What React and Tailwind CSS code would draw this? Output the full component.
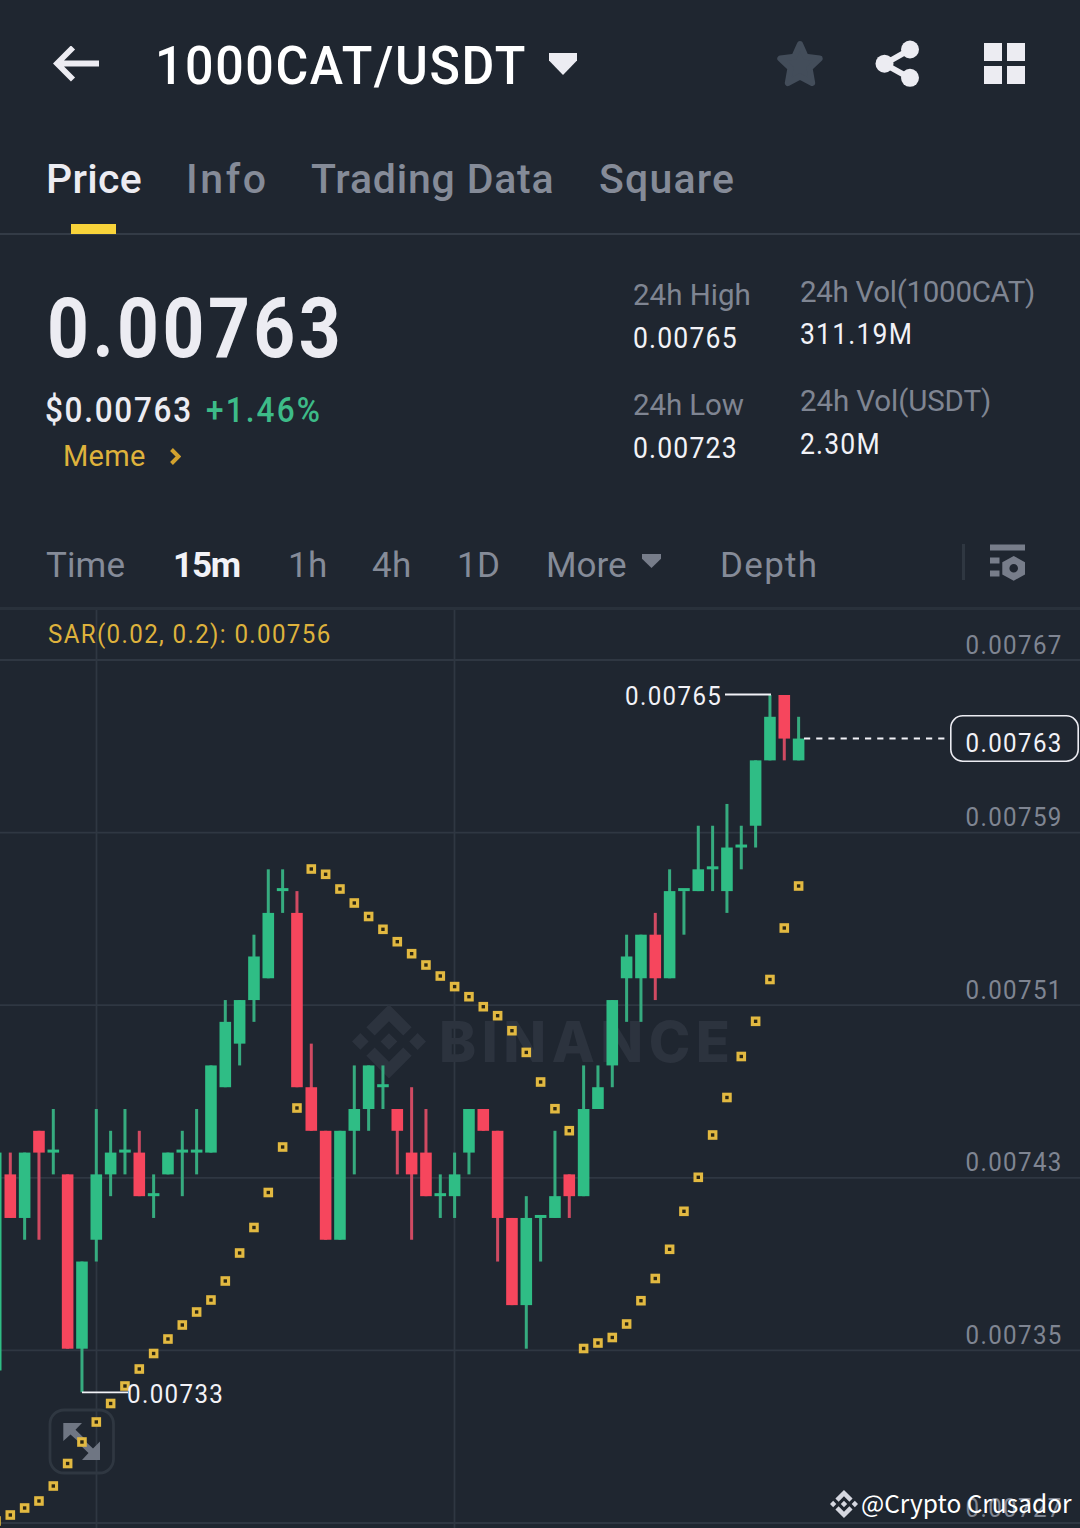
import { SiBinance } from 'react-icons/si'

const tabs = [
  { label: 'Price', className: 'w-[140px] tracking-[0.3px] text-[#ececf2]', active: true },
  { label: 'Info', className: 'w-[125px] tracking-[2.6px]' },
  { label: 'Trading Data', className: 'w-[288px] tracking-[0.8px]' },
  { label: 'Square', className: 'tracking-[1.2px]' },
]

const intervals = [
  { label: 'Time', className: 'w-[127px] tracking-[0.1px]' },
  { label: '15m', className: 'w-[115px] font-bold tracking-[-1.2px] text-[#f2f2f7]' },
  { label: '1h', className: 'w-[84px] tracking-[0.3px]' },
  { label: '4h', className: 'w-[85px] tracking-[0.3px]' },
  { label: '1D', className: 'w-[89px] tracking-[0.3px]' },
  { label: 'More', className: 'w-[94px] tracking-normal' },
]

// [open, high, low, close] in units of 0.00001, one entry per 15 minutes
const candles = [
  [743, 744, 741, 741],
  [741, 744, 740, 744],
  [745, 745, 740, 744],
  [744, 746, 743, 744],
  [743, 743, 735, 735],
  [735, 739, 733, 739],
  [740, 746, 739, 743],
  [743, 745, 742, 744],
  [744, 746, 743, 744],
  [744, 745, 742, 742],
  [742, 743, 741, 742],
  [743, 744, 743, 744],
  [744, 745, 742, 744],
  [744, 746, 743, 744],
  [744, 748, 744, 748],
  [747, 751, 747, 750],
  [749, 751, 748, 751],
  [751, 754, 750, 753],
  [752, 757, 752, 755],
  [756, 757, 755, 756],
  [755, 756, 747, 747],
  [747, 749, 745, 745],
  [745, 745, 740, 740],
  [740, 745, 740, 745],
  [745, 748, 743, 746],
  [746, 748, 745, 748],
  [747, 748, 746, 747],
  [746, 746, 743, 745],
  [744, 747, 740, 743],
  [744, 746, 742, 742],
  [742, 743, 741, 742],
  [742, 744, 741, 743],
  [744, 746, 743, 746],
  [746, 746, 745, 745],
  [745, 745, 739, 741],
  [741, 741, 737, 737],
  [737, 742, 735, 741],
  [741, 741, 739, 741],
  [741, 745, 741, 742],
  [743, 743, 741, 742],
  [742, 748, 742, 746],
  [746, 748, 746, 747],
  [748, 751, 747, 751],
  [752, 754, 750, 753],
  [752, 754, 750, 754],
  [754, 755, 751, 752],
  [752, 757, 752, 756],
  [756, 756, 754, 756],
  [756, 759, 756, 757],
  [757, 759, 756, 757],
  [756, 760, 755, 758],
  [758, 759, 757, 758],
  [759, 762, 758, 762],
  [762, 765, 762, 764],
  [765, 765, 762, 763],
  [762, 764, 762, 763],
]

// Parabolic SAR, y in chart pixels
const sar = [
  905, 898, 891, 876, 853.5, 832, 812, 793.5, 776, 759, 743.5, 729, 715, 702,
  690, 671, 643, 617.5, 582.5, 537, 498, 259, 264.3, 279, 293, 306.5, 319.3,
  331.7, 343.7, 355, 366, 376.6, 386.7, 396.7, 405.7, 420.7, 442.4, 472, 498.7,
  520.7, 738.5, 733, 727.5, 714, 690.7, 668.5, 639.3, 601.3, 567.3, 525, 487.5,
  446.5, 411.3, 369.5, 318, 276,
]

const axis = ['0.00767', '0.00759', '0.00751', '0.00743', '0.00735', '0.00727']

const xAt = (i) => 10.3 + i * 14.333
const yAt = (price) => 85 + (765 - price) * 21.79

function Candle({ i, data }) {
  const [open, high, low, close] = data
  const up = close >= open
  const x = xAt(i)
  const top = open === close ? yAt(close) - 3 : yAt(Math.max(open, close))
  const bottom = yAt(Math.min(open, close))
  return (
    <g>
      {high > low && (
        <rect
          x={x - 1.5}
          y={yAt(high)}
          width="3"
          height={yAt(low) - yAt(high)}
          fill={up ? '#36ab7f' : '#d04a62'}
        />
      )}
      <rect x={x - 5.8} y={top} width="11.6" height={bottom - top} fill={up ? '#2fbd85' : '#f6465d'} />
    </g>
  )
}

function Marker({ x, y }) {
  return (
    <g>
      <rect x={x - 4.8} y={y - 4.8} width="9.6" height="9.6" fill="#e2b941" />
      <rect x={x - 1.7} y={y - 1.7} width="3.4" height="3.4" fill="#2b2613" />
    </g>
  )
}

// Slightly condensed numerals for the chart labels
function ChartText({ x, y, children }) {
  return (
    <text transform={`translate(${x} ${y}) scale(0.91 1)`} className="text-[26.5px] tracking-[1.5px]">
      {children}
    </text>
  )
}

function Caret({ className }) {
  return (
    <svg viewBox="0 0 28 22" preserveAspectRatio="none" className={className} fill="currentColor">
      <path d="M0 0H28V7.500L14 22L0 7.500Z" />
    </svg>
  )
}

function Header() {
  return (
    <header className="flex h-32 items-center text-[#ececf2]">
      <svg viewBox="0 0 46 36" className="ml-[53px] h-9 w-[46px] shrink-0" fill="none" stroke="currentColor" strokeWidth="5.8">
        <path d="M3 17.500H46M20 1.500L4 17.500L20 33.500" />
      </svg>
      <h1 className="ml-[56px] w-[394px] origin-left scale-x-[0.93] pt-[3px] text-[54px] leading-[60px] font-medium tracking-[1.7px] whitespace-nowrap text-white">
        1000CAT/USDT
      </h1>
      <Caret className="h-[22px] w-7" />
      <svg viewBox="0 0 46 48" className="ml-[200px] h-12 w-[46px] text-[#434d5a]" fill="currentColor" stroke="currentColor" strokeWidth="6" strokeLinejoin="round">
        <path d="M23 4L28.700 16.800L42.700 18.600L32.600 28.200L35.200 43L23 36.500L10.800 43L13.400 28.200L3.300 18.600L17.300 16.800Z" />
      </svg>
      <svg viewBox="0 0 44 48" className="ml-[52px] h-12 w-11" fill="currentColor">
        <path d="M9.500 24L35 9.500M9.500 24L35 38.200" stroke="currentColor" strokeWidth="6" />
        <circle cx="9.500" cy="23.700" r="9" />
        <circle cx="35" cy="9.500" r="9" />
        <circle cx="35" cy="37.800" r="9" />
      </svg>
      <div className="-mt-px ml-[65px] grid grid-cols-2 gap-[5px]">
        <span className="size-[18px] bg-current" />
        <span className="size-[18px] bg-current" />
        <span className="size-[18px] bg-current" />
        <span className="size-[18px] bg-current" />
      </div>
    </header>
  )
}

function Tabs() {
  return (
    <nav className="flex h-[107px] border-b-2 border-[#333b46] pt-7 pl-[46px] text-[41px] leading-[46px] font-medium whitespace-nowrap text-[#858b98]">
      {tabs.map((tab) => (
        <div key={tab.label} className={tab.className}>
          {tab.label}
          {tab.active && <div className="mt-[22px] -mb-px ml-[25px] h-[10px] w-[45px] bg-[#f8d33a]" />}
        </div>
      ))}
    </nav>
  )
}

function Stat({ label, value, className, gap }) {
  return (
    <div className={`flex flex-col ${gap}`}>
      <span className={`text-[#7f8592] ${className}`}>{label}</span>
      <span className="origin-left scale-x-90 tracking-[1.3px] text-[#f2f2f7]">{value}</span>
    </div>
  )
}

function Summary() {
  return (
    <section className="flex h-[310px] whitespace-nowrap">
      <div className="w-[633px] pt-[52px] text-[#ececf2]">
        <div className="ml-[47px] origin-left scale-x-[0.87] text-[84px] leading-[84px] font-bold tracking-[4px]">0.00763</div>
        <div className="mt-[19px] ml-[45px] flex text-[35px] leading-[42px] font-medium">
          <span className="w-[161px] origin-left scale-x-90 tracking-[1.9px]">$0.00763</span>
          <span className="origin-left scale-x-90 tracking-[2.4px] text-[#3dbb88]">+1.46%</span>
        </div>
        <div className="mt-[7px] ml-[63px] flex items-center text-[29px] leading-[34px] text-[#deb23c]">
          <span className="w-[107px] tracking-[0.3px]">Meme</span>
          <svg viewBox="0 0 11 17" className="h-[17px] w-[11px]" fill="none" stroke="#d3a22e" strokeWidth="4">
            <path d="M1.500 1.500L8.500 8.500L1.500 15.500" />
          </svg>
        </div>
      </div>
      <div className="flex w-[167px] flex-col gap-[31px] pt-[42px] text-[29.5px] leading-9">
        <Stat label="24h High" value="0.00765" gap="gap-[7px]" className="tracking-normal" />
        <Stat label="24h Low" value="0.00723" gap="gap-[7px]" className="tracking-[-0.1px]" />
      </div>
      <div className="flex flex-col gap-[31px] pt-[39px] text-[29.5px] leading-9">
        <Stat label="24h Vol(1000CAT)" value="311.19M" gap="gap-1.5" className="tracking-[-0.3px]" />
        <Stat label="24h Vol(USDT)" value="2.30M" gap="gap-[7px]" className="tracking-[-0.1px]" />
      </div>
    </section>
  )
}

function Intervals() {
  return (
    <div className="flex h-[65px] border-b-3 border-[#29313b] pl-[46px] text-[35px] leading-[41px] whitespace-nowrap text-[#858b98]">
      {intervals.map((item) => (
        <span key={item.label} className={item.className}>{item.label}</span>
      ))}
      <Caret className="mt-[9px] ml-[2px] h-[14px] w-[19px] text-[#777d8a]" />
      <span className="ml-[59px] w-[242px] tracking-[1.3px]">Depth</span>
      <div className="-mt-px h-9 w-[3px] bg-[#2f3741]" />
      <svg viewBox="0 0 35 37" className="-mt-px ml-[25px] h-[37px] w-[35px] text-[#777d8a]" fill="currentColor">
        <path d="M0 0.500H35V6.500H0ZM0 13.500H9.500V19.500H0ZM0 26.500H9.500V32.500H0Z" />
        <path fillRule="evenodd" d="M23.700 12L35 18.200V30.500L23.700 36.700L12.300 30.500V18.200ZM23.700 20A4.300 4.300 0 1 0 23.700 28.600A4.300 4.300 0 1 0 23.700 20Z" />
      </svg>
    </div>
  )
}

function Chart() {
  return (
    <div className="relative h-[918px] overflow-hidden">
      <svg viewBox="0 0 1080 918" className="block h-[918px] w-[1080px]">
        <g stroke="#2f3742" strokeWidth="1.8">
          {axis.map((label, i) => (
            <line key={label} x1="0" x2="1080" y1={50 + i * 172.6} y2={50 + i * 172.6} />
          ))}
          <line x1="96.500" x2="96.500" y1="0" y2="918" />
          <line x1="454.500" x2="454.500" y1="0" y2="918" />
        </g>

        <g className="text-[#2c333e]" fill="currentColor">
          <SiBinance x="352" y="394.500" size={74} />
          <text x="439" y="452" className="font-[Inter] text-[56px] font-extrabold" textLength="291">BINANCE</text>
        </g>

        <g fill="#7f8592">
          {axis.map((label, i) => (
            <ChartText key={label} x={965.5} y={43.5 + i * 172.6}>{label}</ChartText>
          ))}
        </g>

        <rect x="50" y="800" width="63.500" height="63" rx="14" fill="none" stroke="#2f3741" strokeWidth="2.800" />
        <path
          fill="#6f7683"
          d="M63.300 813H82L75.500 819.800L86 830L81.700 834.500L70.500 824.500L63.300 831ZM100 850H82L88.500 843L78 833L82.300 828.500L93 838.500L100 831.500Z"
        />

        <rect x="0" y={yAt(744)} width="1.500" height={yAt(734) - yAt(744)} fill="#2fbd85" />
        {candles.map((data, i) => (
          <Candle key={i} i={i} data={data} />
        ))}
        <Marker x={-4} y={911} />
        {sar.map((y, i) => (
          <Marker key={i} x={xAt(i)} y={y} />
        ))}

        <g stroke="#f2f2f7" strokeWidth="1.800">
          <line x1="725" x2="771" y1="84.500" y2="84.500" />
          <line x1="82" x2="128" y1="782.300" y2="782.300" />
          <line x1="804" x2="948" y1="128.500" y2="128.500" strokeDasharray="6.200 6" />
        </g>
        <rect x="950.800" y="105.800" width="127.400" height="45.400" rx="12" fill="#1f2630" stroke="#ececf2" strokeWidth="1.600" />
        <g fill="#f2f2f7">
          <ChartText x={965.5} y={141.5}>0.00763</ChartText>
          <ChartText x={625} y={94.5}>0.00765</ChartText>
          <ChartText x={127} y={792.5}>0.00733</ChartText>
        </g>
        <g fill="#deb23c">
          <ChartText x={48} y={33}>SAR(0.02, 0.2): 0.00756</ChartText>
        </g>
      </svg>

      <div className="absolute right-0 bottom-1 flex w-[250px] items-center whitespace-nowrap text-white">
        <SiBinance className="size-7 shrink-0 text-[#d5d7e0]" />
        <span className="ml-[3px] pb-0.5 font-['Noto_Sans_CJK_SC',sans-serif] text-[24.5px] leading-[38px]">@Crypto Crusador</span>
      </div>
    </div>
  )
}

export default function App() {
  return (
    <main className="h-[1528px] w-[1080px] overflow-hidden bg-[#1f2630] font-[Roboto,sans-serif]">
      <Header />
      <Tabs />
      <Summary />
      <Intervals />
      <Chart />
    </main>
  )
}
